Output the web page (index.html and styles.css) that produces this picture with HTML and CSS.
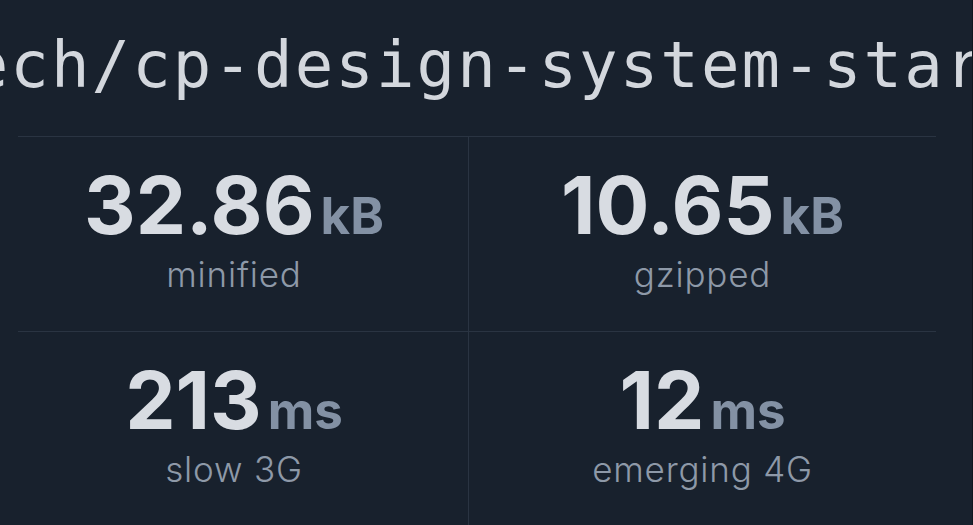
FILE: index.html
```html
<!DOCTYPE html>
<html lang="en">
<head>
<meta charset="utf-8">
<title>cp-design-system-starter</title>
<link rel="stylesheet" href="styles.css">
</head>
<body>
<div class="page">
  <h1 class="title">tech/cp-design-system-starter</h1>
  <div class="stats">
    <div class="row">
      <div class="cell">
        <div class="value">32.86<span class="unit">kB</span></div>
        <div class="label">minified</div>
      </div>
      <div class="cell cell-right">
        <div class="value">10.65<span class="unit">kB</span></div>
        <div class="label">gzipped</div>
      </div>
    </div>
    <div class="row">
      <div class="cell">
        <div class="value">213<span class="unit">ms</span></div>
        <div class="label">slow 3G</div>
      </div>
      <div class="cell cell-right">
        <div class="value">12<span class="unit">ms</span></div>
        <div class="label">emerging 4G</div>
      </div>
    </div>
  </div>
</div>
</body>
</html>
```
FILE: styles.css
```css
html, body {
  margin: 0;
  padding: 0;
  height: 100%;
  background: #18212d;
  overflow: hidden;
}

.page {
  width: 973px;
  height: 525px;
  overflow: hidden;
  border-right: 1px solid #10161e;
  box-sizing: border-box;
}

.title {
  margin: 0;
  padding: 33px 0 39px;
  font-family: "DejaVu Sans Mono", monospace;
  font-weight: normal;
  font-size: 64px;
  line-height: 64px;
  letter-spacing: 2.1px;
  color: #d3d7dd;
  white-space: nowrap;
  overflow: hidden;
  text-indent: -71px;
}

.stats {
  width: 936px;
  display: flex;
  flex-direction: column;
}

.row {
  display: grid;
  grid-template-columns: 468px 468px;
  height: 195px;
  background: linear-gradient(#2a3442, #2a3442) 18px 0 / calc(100% - 18px) 1px no-repeat;
}

.cell {
  display: flex;
  flex-direction: column;
  align-items: center;
  padding-top: 30px;
  box-sizing: border-box;
}

.cell-right {
  border-left: 1px solid #2a3442;
}

.value {
  font-family: Inter, "Noto Sans", sans-serif;
  font-weight: 700;
  font-size: 80px;
  line-height: 78px;
  color: #d8dce2;
  white-space: nowrap;
}

.unit {
  font-size: 51px;
  color: #8391a4;
  margin-left: 6px;
}

.label {
  margin-top: 2px;
  font-family: Inter, "Noto Sans", sans-serif;
  font-weight: 300;
  font-size: 35px;
  line-height: 34px;
  letter-spacing: 0.8px;
  color: #8e99a8;
  white-space: nowrap;
}
```
